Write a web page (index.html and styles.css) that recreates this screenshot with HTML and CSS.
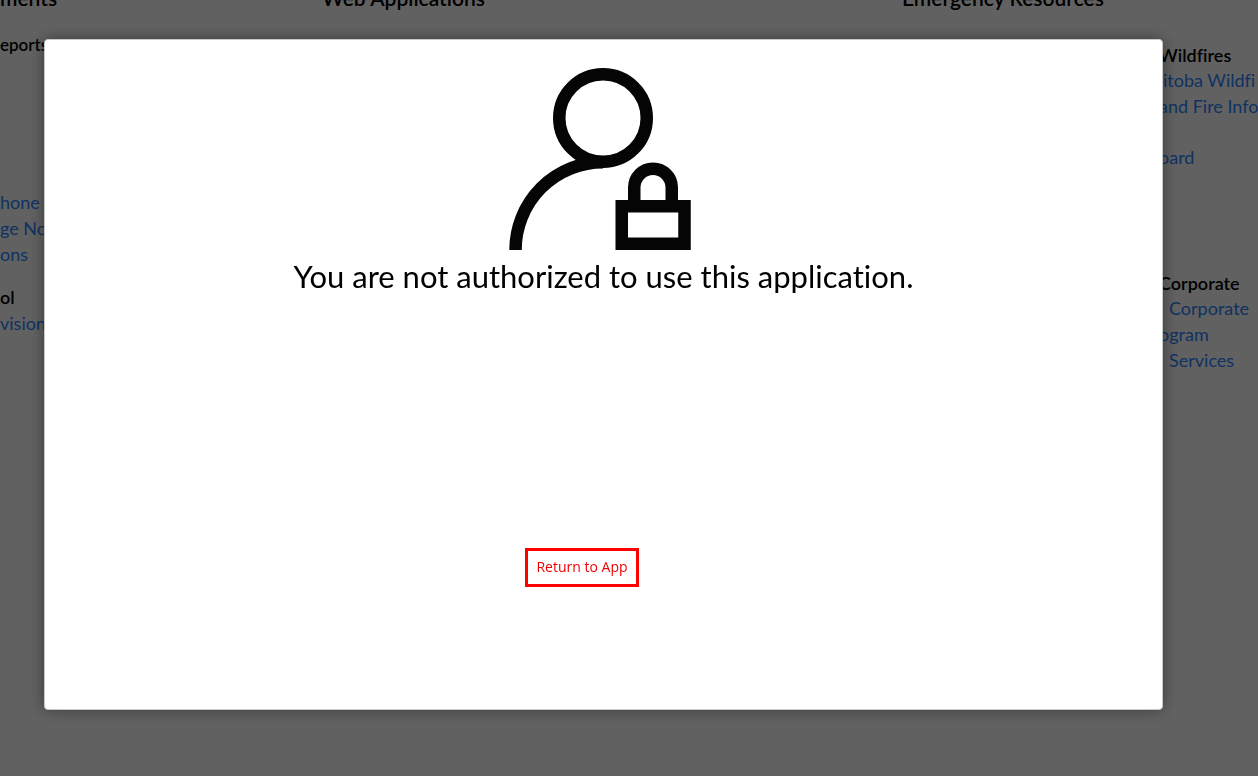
FILE: index.html
```html
<!DOCTYPE html>
<html lang="en">
<head>
<meta charset="utf-8">
<meta name="viewport" content="width=device-width, initial-scale=1">
<title>Not authorized</title>
<link rel="stylesheet" href="styles.css">
</head>
<body>
<main class="page">
  <section class="column">
    <h2 class="column-title">ments</h2>
    <h3 class="group-title reports-title">eports</h3>
    <ul class="links phone-links">
      <li><a href="#">hone</a></li>
      <li><a href="#">ge No</a></li>
      <li><a href="#">ons</a></li>
    </ul>
    <h3 class="group-title tool-title">ol</h3>
    <ul class="links">
      <li><a href="#">vision</a></li>
    </ul>
  </section>
  <section class="column">
    <h2 class="column-title">Web Applications</h2>
  </section>
  <section class="column">
    <h2 class="column-title">Emergency Resources</h2>
    <div class="resources">
      <h3 class="group-title wildfire-title">Wildfires</h3>
      <ul class="links">
        <li class="inset"><a href="#">itoba Wildfi</a></li>
        <li><a href="#">and Fire Info</a></li>
        <li class="spaced"><a href="#">oard</a></li>
      </ul>
      <h3 class="group-title corporate-title">Corporate</h3>
      <ul class="links">
        <li class="indented"><a href="#">Corporate</a></li>
        <li><a href="#">ogram</a></li>
        <li class="indented"><a href="#">Services</a></li>
      </ul>
    </div>
  </section>
</main>
<div class="overlay">
  <div class="dialog" role="dialog" aria-modal="true" aria-labelledby="message">
    <svg class="lock-icon" viewBox="0 0 182 182" fill="none" stroke="#050505" stroke-width="12.5" aria-hidden="true">
      <circle cx="94" cy="50" r="43.75"/>
      <path d="M6.5 182A87.5 87.75 0 0 1 94 94.25"/>
      <path d="M125.25 134v-14.5a18.75 18.75 0 0 1 37.5 0V134"/>
      <path d="M112.75 138.25h62.75v37.5h-62.75z"/>
    </svg>
    <h1 class="message" id="message">You are not authorized to use this application.</h1>
    <button class="return" type="button">Return to App</button>
  </div>
</div>
</body>
</html>
```
FILE: styles.css
```css
* {
  box-sizing: border-box;
}

body {
  margin: 0;
  height: 100vh;
  overflow: hidden;
  background: #fff;
  color: #000;
  font-family: Lato, "Open Sans", sans-serif;
  font-variant-ligatures: none;
}

h1, h2, h3, ul {
  margin: 0;
  padding: 0;
}

.page {
  display: grid;
  grid-template-columns: 322px 580px minmax(0, 1fr);
  margin-top: -16px;
  overflow: hidden;
}

.column {
  white-space: nowrap;
  min-width: 0;
}

.column-title {
  font-size: 21px;
  line-height: 28px;
  font-weight: 600;
}

.group-title {
  font-size: 18px;
  line-height: 26px;
  font-weight: 600;
}

.reports-title {
  margin-top: 20px;
  font-size: 17px;
}

.phone-links {
  margin-top: 131px;
}

.tool-title {
  margin-top: 17px;
}

.links {
  list-style: none;
  font-size: 18px;
  line-height: 26px;
}

.links a {
  color: #2b84ff;
  text-decoration: none;
}

.resources {
  padding-left: 257px;
}

.wildfire-title {
  padding-top: 31px;
  line-height: 24px;
}

.spaced {
  margin-top: 25px;
}

.corporate-title {
  margin-top: 101px;
  line-height: 24px;
}

.inset {
  padding-left: 4px;
}

.indented {
  padding-left: 10px;
}

.overlay {
  position: fixed;
  inset: 0;
  display: flex;
  padding: 39px 95px 66px 44px;
  background: rgba(0, 0, 0, 0.62);
}

.dialog {
  flex: 1;
  display: flex;
  flex-direction: column;
  align-items: center;
  padding-top: 28px;
  background: #fff;
  border: 1px solid #c8c8c8;
  border-radius: 4px;
  box-shadow: 0 0 16px rgba(0, 0, 0, 0.4);
}

.lock-icon {
  width: 182px;
  height: 182px;
  margin-right: 8px;
}

.message {
  margin-top: 6px;
  font-size: 31px;
  line-height: 40px;
  font-weight: 400;
  text-align: center;
}

.return {
  margin: 252px 43px 0 0;
  padding: 5px 8px 7px;
  border: 3px solid #f00;
  background: #fff;
  color: #f00000;
  font-family: "Open Sans", "Noto Sans", sans-serif;
  font-size: 14px;
  line-height: 21px;
}
```
